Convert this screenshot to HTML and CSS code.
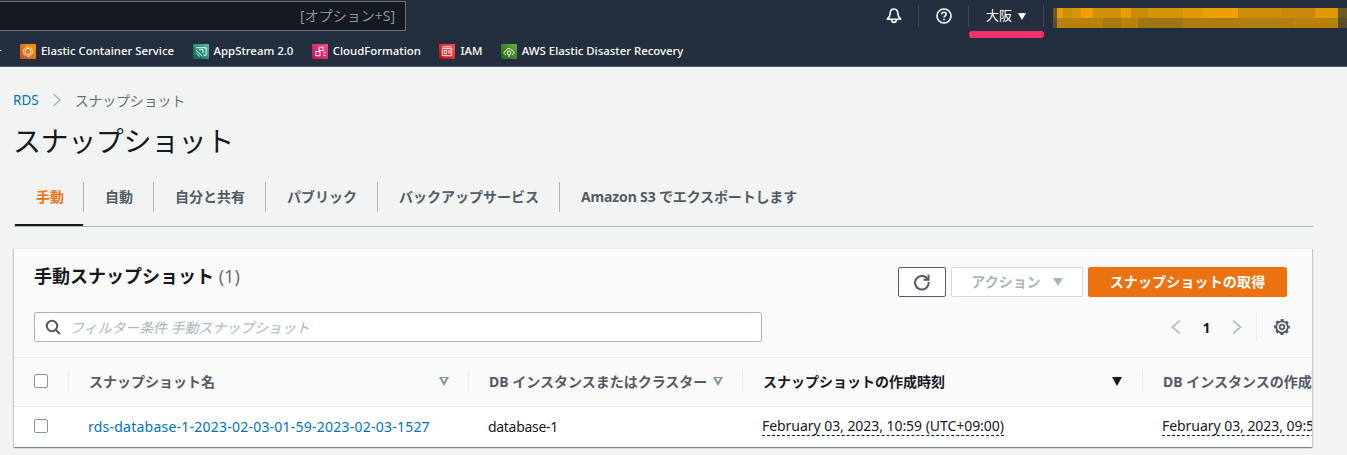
FILE: index.html
```html
<!DOCTYPE html>
<html lang="ja">
<head>
<meta charset="utf-8">
<title>スナップショット</title>
<link rel="stylesheet" href="styles.css">
</head>
<body>
<header class="nav">
  <div class="nav-top">
    <div class="search"><span>[オプション+S]</span></div>
    <div class="nav-tools">
      <div class="tool tool-bell">
        <svg width="16" height="16" viewBox="0 0 16 16" fill="none" stroke="#fff" stroke-width="1.6"><path d="M8 1C5.400 1 4.200 3 4.200 5.400c0 2.400-1 4-2.900 5.800h13.400c-1.900-1.800-2.900-3.400-2.900-5.800C11.800 3 10.600 1 8 1z" stroke-linejoin="round"/><path d="M5.600 11.600c0 1.700 1 2.800 2.400 2.800s2.400-1.100 2.400-2.800"/></svg>
      </div>
      <div class="tool tool-help">
        <svg width="16" height="16" viewBox="0 0 16 16" fill="none" stroke="#fff" stroke-width="1.6"><circle cx="8" cy="8" r="7"/><path d="M5.800 6.300C5.800 5 6.800 4.200 8 4.200c1.300 0 2.200.8 2.200 1.900 0 1.700-2.200 1.700-2.200 3.500"/><path d="M8 10.800v1.500"/></svg>
      </div>
      <div class="tool tool-region">
        <span class="region-name">大阪</span><i class="caret"></i>
        <b class="marker"></b>
      </div>
      <div class="account">
        <div class="blur blur-a"></div>
        <div class="blur blur-b"></div>
      </div>
    </div>
  </div>
  <div class="favs">
    <span class="fav-cut">r</span>
    <a class="fav"><svg class="tile tile-orange" viewBox="0 0 16 16" fill="none" stroke="#fff" stroke-width="1"><circle cx="8" cy="8" r="5" stroke-dasharray="4 1"/><path d="M8 4.500l3 1.800v3.400l-3 1.800-3-1.800V6.300z"/></svg><span class="fav-text">Elastic Container Service</span></a>
    <a class="fav"><svg class="tile tile-teal" viewBox="0 0 16 16" fill="none" stroke="#fff" stroke-width="1"><path d="M2.500 4h11v8h-3"/><path d="M2.500 6.500l7 6.500M2.500 9.500l4 3.500"/><path d="M6 6h4v4"/></svg><span class="fav-text">AppStream 2.0</span></a>
    <a class="fav"><svg class="tile tile-pink" viewBox="0 0 16 16" fill="none" stroke="#fff" stroke-width="1"><path d="M7 3.500h4.500V7H7zM3.500 8H8v4.500H3.500z"/><path d="M11.500 9H14M11.500 12H14"/></svg><span class="fav-text">CloudFormation</span></a>
    <a class="fav"><svg class="tile tile-red" viewBox="0 0 16 16" fill="none" stroke="#fff" stroke-width="1"><path d="M3 5h10v7.500H3zM3 3h10"/><path d="M5 7h2.500v3.500H5zM9 7.500h3M9 9.500h3"/></svg><span class="fav-text">IAM</span></a>
    <a class="fav"><svg class="tile tile-green" viewBox="0 0 16 16" fill="none" stroke="#fff" stroke-width="1"><path d="M5 11.500c-3 0-3-3.500-.5-4C5 5 9 3.500 10.500 6.500c3-.2 3.500 4.500.5 5"/><circle cx="8" cy="9.500" r="2"/><path d="M8 11.500V14"/></svg><span class="fav-text">AWS Elastic Disaster Recovery</span></a>
  </div>
</header>

<main class="page">
  <nav class="crumbs">
    <a class="link crumb-link">RDS</a>
    <svg class="crumb-sep" width="10" height="14" viewBox="0 0 10 14" fill="none" stroke="#aab7b8" stroke-width="1.500"><path d="M1.500 1l6.500 6-6.500 6"/></svg>
    <span class="crumb-now">スナップショット</span>
  </nav>
  <h1 class="title">スナップショット</h1>

  <div class="tabs">
    <a class="tab tab-active">手動</a>
    <a class="tab">自動</a>
    <a class="tab">自分と共有</a>
    <a class="tab">パブリック</a>
    <a class="tab">バックアップサービス</a>
    <a class="tab tab-export">Amazon S3 でエクスポートします</a>
  </div>

  <section class="card">
    <div class="card-head">
      <div class="head-row">
        <h2 class="card-title">手動スナップショット <span class="count">(1)</span></h2>
        <div class="actions">
          <button class="btn btn-icon">
            <svg width="18" height="18" viewBox="0 0 18 18" fill="none" stroke="#545b64" stroke-width="2"><path d="M14.700 6.300A6.800 6.800 0 1 0 15.600 9"/><path d="M15.500 1.800v5h-5"/></svg>
          </button>
          <button class="btn btn-disabled">アクション<i class="caret caret-grey"></i></button>
          <button class="btn btn-primary">スナップショットの取得</button>
        </div>
      </div>
      <div class="filter-row">
        <div class="filter">
          <svg width="16" height="16" viewBox="0 0 16 16" fill="none" stroke="#545b64" stroke-width="2"><circle cx="7" cy="7" r="5.200"/><path d="M10.800 10.800L15 15"/></svg>
          <span>フィルター条件 手動スナップショット</span>
        </div>
        <div class="pager">
          <svg width="12" height="16" viewBox="0 0 12 16" fill="none" stroke="#aab7b8" stroke-width="1.600"><path d="M10 1.500L2.500 8l7.500 6.500"/></svg>
          <span class="page-num">1</span>
          <svg width="12" height="16" viewBox="0 0 12 16" fill="none" stroke="#aab7b8" stroke-width="1.600"><path d="M2 1.500L9.500 8 2 14.500"/></svg>
          <div class="pager-set">
            <svg width="16" height="16" viewBox="0 0 16 16" fill="none" stroke="#545b64"><circle cx="8" cy="8" r="2.300" stroke-width="1.700"/><circle cx="8" cy="8" r="5.700" stroke-width="1.700"/><circle cx="8" cy="8" r="7" stroke-width="1.800" stroke-dasharray="3.200 2.300" stroke-dashoffset="1.600"/></svg>
          </div>
        </div>
      </div>
    </div>
    <div class="table">
      <div class="th th-check"><i class="check"></i></div>
      <div class="th"><span>スナップショット名</span><i class="sort"></i></div>
      <div class="th"><span>DB インスタンスまたはクラスター</span><i class="sort"></i></div>
      <div class="th th-sorted"><span>スナップショットの作成時刻</span><i class="sort-on"></i></div>
      <div class="th th-last"><span>DB インスタンスの作成時刻</span></div>
      <div class="td td-check"><i class="check"></i></div>
      <div class="td"><a class="link link-row">rds-database-1-2023-02-03-01-59-2023-02-03-1527</a></div>
      <div class="td"><span class="db-name">database-1</span></div>
      <div class="td"><span class="dotted">February 03, 2023, 10:59 (UTC+09:00)</span></div>
      <div class="td"><span class="dotted">February 03, 2023, 09:52 (UTC+09:00)</span></div>
    </div>
  </section>
</main>
</body>
</html>
```
FILE: styles.css
```css
* { box-sizing: border-box; }
html, body { margin: 0; height: 455px; overflow: hidden; }
body {
  background: #f2f3f3;
  color: #16191f;
  font-family: "Noto Sans", "Noto Sans CJK JP", sans-serif;
  font-size: 14px;
}
i { display: block; }

.nav {
  height: 67px;
  background: #232f3e;
  border-bottom: 1px solid #545b64;
  color: #fff;
}
.nav-top { display: flex; height: 37px; }
.search {
  margin: 1px 0 0 -10px;
  width: 416px;
  height: 30px;
  background: #16191f;
  border: 1px solid #687078;
  display: flex;
  align-items: center;
  justify-content: flex-end;
  padding: 0 10px 2px 0;
  color: #879596;
  font-size: 14px;
}
.nav-tools { margin-left: auto; display: flex; align-items: flex-start; padding-top: 5px; }
.tool { height: 22px; display: flex; align-items: center; justify-content: center; }
.tool-bell { width: 34px; border-right: 1px solid #414750; padding-right: 15px; }
.tool-help { width: 50px; border-right: 1px solid #414750; }
.tool-region {
  position: relative;
  width: 75px;
  border-right: 1px solid #414750;
  gap: 6px;
  font-size: 13px;
  margin-right: 9px;
  padding-right: 0;
}
.region-name { margin-bottom: 4px; }
.caret {
  width: 0;
  height: 0;
  border-left: 4.500px solid transparent;
  border-right: 4.500px solid transparent;
  border-top: 7px solid #fff;
}
.marker {
  position: absolute;
  left: 0;
  top: 26px;
  width: 75px;
  height: 7px;
  background: #ff2f6e;
  border-radius: 3px;
}
.account { width: 294px; padding-top: 3px; }
.blur { height: 10px; width: 294px; }
.blur-a {
  background: linear-gradient(90deg, #6b5a28 0 4px, #e89d05 4px 10px, #cb8d0a 10px 19px, #d99508 19px 28px, #ee9f04 28px 40px, #cf900a 40px 68px, #e89d05 68px 78px, #c98c0a 78px 95px, #d59308 95px 130px, #e09a07 130px 150px, #ee9f03 150px 185px, #cc8e0a 185px 228px, #c8890b 228px 262px, #e19a06 262px 285px, #6b5a28 285px 294px);
}
.blur-b {
  background: linear-gradient(90deg, #5a4f2c 0 4px, #b9820f 4px 50px, #a87a14 50px 68px, #b9820f 68px 85px, #a07516 85px 130px, #ae7c12 130px 185px, #b07f12 185px 240px, #b9820f 240px 285px, #5a4f2c 285px 294px);
}

.favs { display: flex; align-items: center; height: 29px; }
.fav-cut { width: 23px; margin-left: -3px; font-size: 11px; color: #eaeded; }
.fav {
  display: flex;
  align-items: center;
  gap: 5px;
  font-size: 11.400px;
  font-weight: 500;
  color: #fff;
  margin-right: 18.500px;
  white-space: nowrap;
}
.fav-text { margin-bottom: 2px; }
.tile { width: 16px; height: 15px; flex: none; border-radius: 1px; }
.tile-orange { background: linear-gradient(45deg, #c8511b, #ff9900); }
.tile-teal { background: linear-gradient(45deg, #055f4e, #56c0a7); }
.tile-pink { background: linear-gradient(45deg, #bc1356, #ff4f8b); }
.tile-red { background: linear-gradient(45deg, #bd0816, #ff5252); }
.tile-green { background: linear-gradient(45deg, #1b660f, #6cae3e); }

.page { padding: 0 34px 0 14px; }
.crumbs {
  display: flex;
  align-items: center;
  height: 20px;
  margin: 23px 0 0 -1px;
  color: #687078;
  font-size: 14px;
  gap: 13px;
}
.crumb-link { font-size: 13.500px; }
.crumb-now { letter-spacing: -.2px; margin-left: -1px; }
.link { color: #0073bb; }
.crumb-sep { flex: none; margin-right: 1px; }
.title {
  margin: 11px 0 0 -1px;
  font-size: 28px;
  font-weight: 400;
  line-height: 40px;
  letter-spacing: -.4px;
}
.tabs {
  display: flex;
  margin-top: 21px;
  height: 45px;
  border-bottom: 1px solid #aab7b8;
}
.tab {
  display: block;
  height: 44px;
  padding: 0 20px 0 22px;
  font-size: 14px;
  font-weight: 700;
  line-height: 30px;
  color: #545b64;
  background: linear-gradient(#aab7b8, #aab7b8) left top / 1px 30px no-repeat;
}
.tab-export { letter-spacing: -.15px; }
.tab-active {
  color: #ec7211;
  background: none;
  border-bottom: 2px solid #16191f;
  margin-left: 1px;
  padding: 0 19px 0 21px;
}

.card {
  margin-top: 21px;
  width: 1298px;
  height: 199px;
  background: #fff;
  box-shadow: 0 1px 1px 0 rgba(0, 28, 36, .3), 1px 1px 1px 0 rgba(0, 28, 36, .15), -1px 1px 1px 0 rgba(0, 28, 36, .15);
  overflow: hidden;
  border-top: 1px solid #eaeded;
}
.card-head { height: 109px; background: #fafafa; padding: 18px 25px 0 20px; border-bottom: 1px solid #eaeded; }
.head-row { display: flex; justify-content: space-between; align-items: flex-start; height: 45px; }
.card-title { margin: -3px 0 0; font-size: 18px; font-weight: 700; line-height: 24px; }
.count { color: #687078; font-weight: 400; }
.actions { display: flex; gap: 5px; }
.btn {
  height: 30px;
  font-family: inherit;
  font-size: 14px;
  font-weight: 700;
  border-radius: 2px;
  padding: 0 0 2px;
  display: flex;
  align-items: center;
  justify-content: center;
}
.btn-icon { width: 48px; background: #fff; border: 1px solid #545b64; padding: 0; }
.btn-disabled { width: 132px; gap: 12px; background: #fff; border: 1px solid #d5dbdb; color: #aab7b8; }
.caret-grey { border-top-color: #aab7b8; border-left-width: 5.500px; border-right-width: 5.500px; border-top-width: 8px; margin-top: 2px; }
.btn-primary { width: 199px; background: #ec7211; border: 1px solid #ec7211; color: #fff; letter-spacing: .15px; }
.filter-row { display: flex; justify-content: space-between; align-items: center; }
.filter {
  width: 728px;
  height: 30px;
  background: #fff;
  border: 1px solid #aab7b8;
  border-radius: 2px;
  display: flex;
  align-items: center;
  gap: 9px;
  padding-left: 10px;
  color: #aab7b8;
  font-style: italic;
  font-size: 14px;
  letter-spacing: -.1px;
}
.pager { display: flex; align-items: center; height: 30px; margin-right: -3px; }
.pager svg { flex: none; }
.page-num { width: 49px; text-align: center; font-weight: 700; color: #16191f; }
.pager-set { margin-left: 13px; padding-left: 17px; border-left: 1px solid #eaeded; height: 30px; display: flex; align-items: center; }

.table {
  display: grid;
  grid-template-columns: 54px 400px 274px 400px 400px;
  grid-template-rows: 49px 40px;
}
.th, .td { display: flex; align-items: center; white-space: nowrap; overflow: hidden; padding: 0 20px; }
.th {
  background: #fafafa;
  border-bottom: 1px solid #eaeded;
  color: #545b64;
  font-weight: 700;
  font-size: 14px;
  justify-content: space-between;
  position: relative;
  padding: 0 20px 2px 21px;
}
.th::before {
  content: "";
  position: absolute;
  left: 0;
  top: 12px;
  bottom: 13px;
  width: 1px;
  background: #eaeded;
}
.th-check::before { display: none; }
.th-check, .td-check { padding-left: 20px; }
.th-check .check { margin-top: -1px; }
.th-sorted { color: #16191f; }
.td { color: #16191f; font-size: 14px; padding-bottom: 1px; }
.td-check .check { margin-top: -2px; }
.check { width: 14px; height: 14px; background: #fff; border: 1px solid #879596; border-radius: 2px; }
.link-row { letter-spacing: .23px; }
.db-name { letter-spacing: -.3px; }
.sort { width: 0; height: 0; border-left: 5.500px solid transparent; border-right: 5.500px solid transparent; border-top: 9px solid #879596; position: relative; margin-right: -1px; }
.sort::after { content: ""; position: absolute; left: -2.500px; top: -7.500px; border-left: 2.500px solid transparent; border-right: 2.500px solid transparent; border-top: 4px solid #fafafa; }
.sort-on { width: 0; height: 0; border-left: 5.500px solid transparent; border-right: 5.500px solid transparent; border-top: 9px solid #16191f; }
.dotted { border-bottom: 1px dashed #16191f; line-height: 18px; letter-spacing: -.05px; }
```
